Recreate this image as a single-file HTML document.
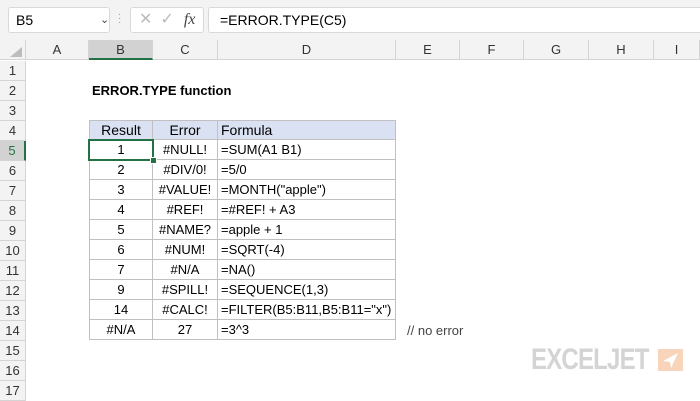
<!DOCTYPE html>
<html><head><style>
body{margin:0;width:700px;height:400px;overflow:hidden;background:#fff;font-family:"Liberation Sans",sans-serif;position:relative}
.a{position:absolute}
.top{left:0;top:0;width:700px;height:40px;background:#f3f3f3}
.box{background:#fff;border:1px solid #d9d9d9;border-radius:3px}
.ch{top:40px;height:20px;background:#f3f3f3;border-right:1px solid #d4d4d4;border-bottom:1px solid #d4d4d4;box-sizing:border-box;text-align:center;font-size:13px;line-height:20px;color:#333}
.rh{left:0;width:26px;height:20px;background:#f3f3f3;border-bottom:1px solid #d4d4d4;border-right:1px solid #d4d4d4;box-sizing:border-box;text-align:center;font-size:13px;line-height:20px;color:#333}
.c{height:20px;border-right:1px solid #c0c0c0;border-bottom:1px solid #c0c0c0;box-sizing:border-box;font-size:13px;line-height:20px;color:#000;white-space:nowrap;overflow:hidden}
</style></head><body>
<div class="a top"></div>
<div class="a box" style="left:8px;top:7px;width:100px;height:24px;font-size:14px;line-height:24px;text-indent:7px">B5<span class="a" style="left:84px;top:0;font-size:11px;color:#444">&#8964;</span></div>
<div class="a" style="left:118px;top:13px;color:#999;font-size:10px;line-height:4px">·<br>·<br>·</div>
<div class="a box" style="left:130px;top:7px;width:72px;height:24px;color:#bbb;font-size:16px;line-height:24px"><span style="margin-left:8px">✕</span><span style="margin-left:8px">✓</span><span style="margin-left:10px;color:#444;font-family:'Liberation Serif',serif;font-style:italic">fx</span></div>
<div class="a box" style="left:208px;top:7px;width:500px;height:24px;font-size:14px;line-height:24px;text-indent:11px">=ERROR.TYPE(C5)</div>
<div class="a ch" style="left:0;width:26px"></div>
<div class="a" style="left:10px;top:47px;width:0;height:0;border-left:12px solid transparent;border-bottom:10px solid #bdbdbd"></div>
<div class="a ch" style="left:26px;width:63px">A</div>
<div class="a ch" style="left:89px;width:64px;background:#d2d2d2;border-bottom:2px solid #217346">B</div>
<div class="a ch" style="left:153px;width:65px">C</div>
<div class="a ch" style="left:218px;width:178px">D</div>
<div class="a ch" style="left:396px;width:64px">E</div>
<div class="a ch" style="left:460px;width:64px">F</div>
<div class="a ch" style="left:524px;width:65px">G</div>
<div class="a ch" style="left:589px;width:65px">H</div>
<div class="a ch" style="left:654px;width:46px">I</div>
<div id="rows"></div>
<div class="a" style="left:92px;top:82px;font-size:13px;font-weight:bold;line-height:18px">ERROR.TYPE function</div>
<div id="t"></div>
<div class="a" style="left:407px;top:321px;font-size:13px;color:#444;line-height:20px">// no error</div>
<div class="a" style="left:531px;top:343px;font-size:30px;font-weight:bold;color:#d4d4d4;letter-spacing:-1px;transform:scaleX(.8);transform-origin:left;line-height:34px">EXCELJET</div>
<svg class="a" style="left:658px;top:349px" width="25" height="22"><rect width="25" height="22" fill="#f8d4bb"/><path d="M5 12 L20 4 L13 19 L12 13 Z" fill="#fff"/></svg>
<script>
let h='';for(let i=1;i<=17;i++){h+=`<div class="a rh" style="top:${41+i*20}px;${i==5?'background:#d2d2d2;color:#217346;border-right:2px solid #217346':''}">${i}</div>`}
document.getElementById('rows').innerHTML=h;
const d=[["1","#NULL!","=SUM(A1 B1)"],["2","#DIV/0!","=5/0"],["3","#VALUE!",'=MONTH("apple")'],["4","#REF!","=#REF! + A3"],["5","#NAME?","=apple + 1"],["6","#NUM!","=SQRT(-4)"],["7","#N/A","=NA()"],["9","#SPILL!","=SEQUENCE(1,3)"],["14","#CALC!",'=FILTER(B5:B11,B5:B11="x")'],["#N/A","27","=3^3"]];
let t='<div class="a" style="left:89px;top:120px;width:307px;height:20px;background:#d9e1f2;border-top:1px solid #c0c0c0;box-sizing:border-box"></div>';
const hd=["Result","Error","Formula"];
const X=[89,153,218,396];
for(let r=0;r<11;r++){const y=120+r*20;const row=r==0?hd:d[r-1];
for(let k=0;k<3;k++){t+=`<div class="a c" style="left:${X[k]}px;top:${y}px;width:${X[k+1]-X[k]}px;text-align:${k==2?'left':'center'};padding-left:${k==2?3:0}px;${k==0?'border-left:1px solid #c0c0c0;':''}${r==0?'border-top:1px solid #c0c0c0;font-size:14px;line-height:19px;':''}">${row[k].replace(/</g,'&lt;')}</div>`}}
t+='<div class="a" style="left:88px;top:139px;width:66px;height:22px;border:2px solid #217346;box-sizing:border-box"></div><div class="a" style="left:150px;top:157px;width:5px;height:5px;background:#217346;border:1px solid #fff"></div>';
document.getElementById('t').innerHTML=t;
</script>
</body></html>
